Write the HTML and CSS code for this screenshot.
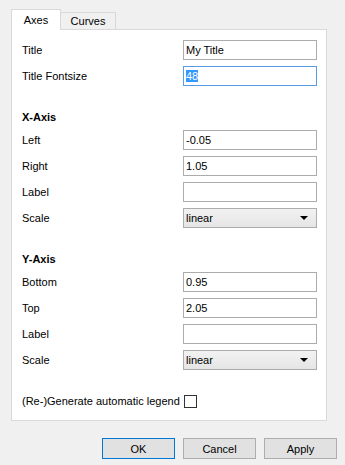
FILE: index.html
```html
<!DOCTYPE html>
<html>
<head>
  <title>Plot options</title>
  <link rel="stylesheet" href="styles.css">
</head>
<body>
<div class="dialog">
  <div class="tabs">
    <div class="tab active">Axes</div>
    <div class="tab">Curves</div>
  </div>
  <div class="panel">
    <div class="form">
      <label>Title</label><input class="field" type="text" value="My Title">
      <label>Title Fontsize</label><div class="field focus"><span class="sel">48</span></div>
    </div>

    <div class="section">X-Axis</div>
    <div class="form">
      <label>Left</label><input class="field" type="text" value="-0.05">
      <label>Right</label><input class="field" type="text" value="1.05">
      <label>Label</label><input class="field" type="text" value="">
      <label>Scale</label><div class="combo">linear<span class="arrow"></span></div>
    </div>

    <div class="section">Y-Axis</div>
    <div class="form">
      <label>Bottom</label><input class="field" type="text" value="0.95">
      <label>Top</label><input class="field" type="text" value="2.05">
      <label>Label</label><input class="field" type="text" value="">
      <label>Scale</label><div class="combo">linear<span class="arrow"></span></div>
    </div>

    <div class="legend">
      <label>(Re-)Generate automatic legend</label><span class="check"></span>
    </div>
  </div>
  <div class="buttons">
    <button class="btn default">OK</button>
    <button class="btn">Cancel</button>
    <button class="btn">Apply</button>
  </div>
</div>
</body>
</html>
```

FILE: styles.css
```css
body {
  margin: 0;
  background: #f0f0f0;
  font-family: "Liberation Sans", Arial, sans-serif;
  font-size: 11px;
  color: #000;
}
.dialog {
  padding: 9px 8px 0 11px;
}
.tabs {
  display: flex;
  align-items: flex-end;
  margin-bottom: -1px;
}
.tab {
  box-sizing: border-box;
  height: 18px;
  width: 56px;
  margin-left: -1px;
  border: 1px solid #d9d9d9;
  background: #f0f0f0;
  text-align: center;
  line-height: 17px;
}
.tab.active {
  position: relative;
  z-index: 1;
  height: 21px;
  width: 50px;
  margin-left: 0;
  background: #fff;
  border-bottom: none;
  line-height: 21px;
}
.panel {
  box-sizing: border-box;
  width: 316px;
  background: #fff;
  border: 1px solid #d9d9d9;
  padding: 10px 9px 9px 10px;
}
.form {
  display: grid;
  grid-template-columns: 161px 134px;
  grid-auto-rows: 20px;
  row-gap: 6px;
  align-items: center;
}
.field, .combo {
  box-sizing: border-box;
  height: 20px;
  width: 134px;
  margin: 0;
  border: 1px solid #acacac;
  padding: 0 2px;
  font-family: inherit;
  font-size: 11px;
  line-height: 18px;
  background: #fff;
  outline: none;
}
.focus {
  border-color: #569de5;
}
.sel {
  background: #3399ff;
  color: #fff;
}
.combo {
  display: flex;
  justify-content: space-between;
  align-items: center;
  background: linear-gradient(#f2f2f2, #e5e5e5);
  padding-right: 8px;
}
.arrow {
  width: 0;
  height: 0;
  border-left: 4px solid transparent;
  border-right: 4px solid transparent;
  border-top: 4px solid #000;
}
.section {
  font-weight: bold;
  height: 14px;
  line-height: 14px;
  margin: 24px 0 6px;
}
.legend {
  display: flex;
  align-items: center;
  gap: 4px;
  height: 20px;
  margin-top: 21px;
}
.check {
  box-sizing: border-box;
  width: 13px;
  height: 13px;
  border: 1px solid #333;
  background: #fff;
}
.buttons {
  display: flex;
  justify-content: flex-end;
  gap: 8px;
  margin-top: 17px;
}
.btn {
  box-sizing: border-box;
  width: 73px;
  height: 21px;
  border: 1px solid #adadad;
  background: #e1e1e1;
  font-family: inherit;
  font-size: 11px;
  padding: 0;
}
.btn.default {
  border-color: #0078d7;
}
```
